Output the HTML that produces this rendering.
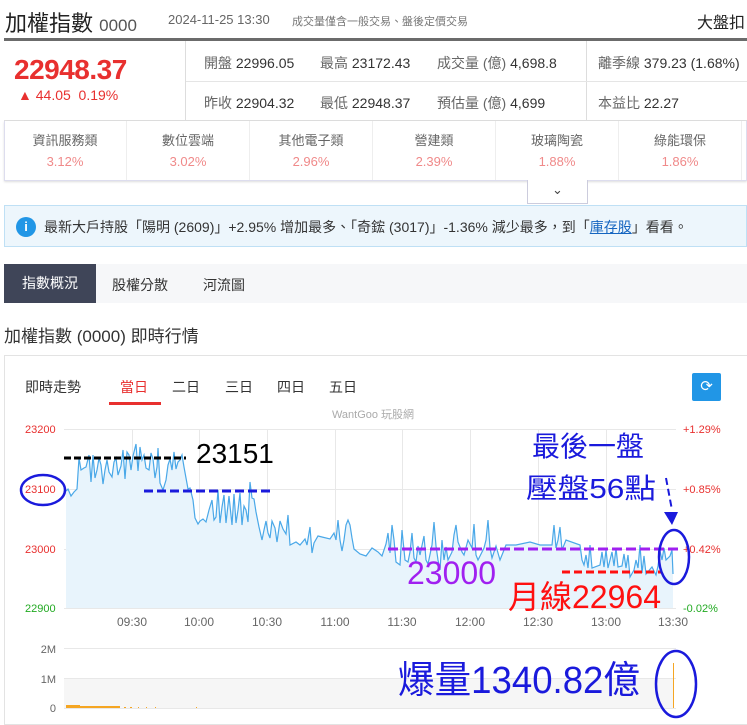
<!DOCTYPE html>
<html><head><meta charset="utf-8"><style>
*{box-sizing:border-box;margin:0;padding:0}
body{width:747px;height:719px;overflow:hidden;background:#fff;font-family:"Liberation Sans","Noto Sans CJK TC",sans-serif;color:#333;position:relative}
.a{position:absolute;white-space:nowrap}
.cell{position:absolute;font-size:14px;color:#333}
.cell b{font-weight:normal;color:#666}
.sec{position:absolute;top:121px;height:59px;width:123px;text-align:center;border-right:1px solid #eee}
.sec .n{font-size:13px;color:#666;margin-top:9px}
.sec .p{font-size:13px;color:#f08a8a;margin-top:5px}
</style></head><body>
<div class="a" style="left:5px;top:6px;font-size:22px;color:#222">加權指數 <span style="font-size:17px;color:#555">0000</span></div>
<div class="a" style="left:168px;top:12px;font-size:13px;color:#666">2024-11-25 13:30</div>
<div class="a" style="left:292px;top:13px;font-size:11px;color:#777">成交量僅含一般交易、盤後定價交易</div>
<div class="a" style="left:697px;top:9px;font-size:16px;color:#222">大盤扣</div>
<div class="a" style="left:4px;top:38px;width:743px;height:3px;background:#6b6b6b"></div>
<div class="a" style="left:4px;top:41px;width:743px;height:80px;border-bottom:1px solid #ddd"></div>
<div class="a" style="left:185px;top:41px;width:1px;height:80px;background:#ddd"></div>
<div class="a" style="left:586px;top:41px;width:1px;height:80px;background:#ddd"></div>
<div class="a" style="left:186px;top:81px;width:561px;height:1px;background:#e5e5e5"></div>
<div class="a" style="left:14px;top:54px;font-size:28px;font-weight:bold;color:#e8302f;letter-spacing:-0.5px">22948.37</div>
<div class="a" style="left:18px;top:87px;font-size:14px;color:#e8302f">▲ 44.05 &nbsp;0.19%</div>
<div class="cell" style="left:204px;top:53px"><b>開盤</b> 22996.05</div>
<div class="cell" style="left:320px;top:53px"><b>最高</b> 23172.43</div>
<div class="cell" style="left:437px;top:53px"><b>成交量 (億)</b> 4,698.8</div>
<div class="cell" style="left:598px;top:53px"><b>離季線</b> 379.23 (1.68%)</div>
<div class="cell" style="left:204px;top:93px"><b>昨收</b> 22904.32</div>
<div class="cell" style="left:320px;top:93px"><b>最低</b> 22948.37</div>
<div class="cell" style="left:437px;top:93px"><b>預估量 (億)</b> 4,699</div>
<div class="cell" style="left:598px;top:93px"><b>本益比</b> 22.27</div>
<div class="a" style="left:4px;top:121px;width:743px;height:60px;border:1px solid #dde;border-top:none;box-shadow:0 1px 2px #ddd"></div>
<div class="sec" style="left:4px"><div class="n">資訊服務類</div><div class="p">3.12%</div></div>
<div class="sec" style="left:127px"><div class="n">數位雲端</div><div class="p">3.02%</div></div>
<div class="sec" style="left:250px"><div class="n">其他電子類</div><div class="p">2.96%</div></div>
<div class="sec" style="left:373px"><div class="n">營建類</div><div class="p">2.39%</div></div>
<div class="sec" style="left:496px"><div class="n">玻璃陶瓷</div><div class="p">1.88%</div></div>
<div class="sec" style="left:619px"><div class="n">綠能環保</div><div class="p">1.86%</div></div>
<div class="a" style="left:527px;top:180px;width:61px;height:24px;border:1px solid #ccd;border-top:none;background:#fff;text-align:center;font-size:13px;color:#444;line-height:20px">⌄</div>
<div class="a" style="left:4px;top:205px;width:743px;height:42px;background:#edf6fc;border:1px solid #bfe0f5"></div>
<div class="a" style="left:16px;top:217px;width:20px;height:20px;border-radius:50%;background:#2196e6;color:#fff;font-size:13px;text-align:center;line-height:20px;font-weight:bold">i</div>
<div class="a" style="left:44px;top:217px;font-size:14px;color:#333">最新大戶持股「陽明 (2609)」+2.95% 增加最多、「奇鋐 (3017)」-1.36% 減少最多，到「<span style="color:#1565c0;text-decoration:underline">庫存股</span>」看看。</div>
<div class="a" style="left:4px;top:264px;width:743px;height:39px;background:#f6f7f9"></div>
<div class="a" style="left:4px;top:264px;width:92px;height:39px;background:#3f4558;color:#fff;font-size:14px;text-align:center;line-height:39px">指數概況</div>
<div class="a" style="left:112px;top:275px;font-size:14px;color:#333">股權分散</div>
<div class="a" style="left:203px;top:275px;font-size:14px;color:#333">河流圖</div>
<div class="a" style="left:4px;top:322px;font-size:17px;color:#333">加權指數 (0000) 即時行情</div>
<div class="a" style="left:4px;top:355px;width:745px;height:370px;border:1px solid #e3e3e3"></div>
<div class="a" style="left:25px;top:377px;font-size:14px;color:#333">即時走勢</div>
<div class="a" style="left:120px;top:377px;font-size:14px;color:#e8302f">當日</div>
<div class="a" style="left:109px;top:402px;width:52px;height:3px;background:#e8302f"></div>
<div class="a" style="left:172px;top:377px;font-size:14px;color:#333">二日</div>
<div class="a" style="left:225px;top:377px;font-size:14px;color:#333">三日</div>
<div class="a" style="left:277px;top:377px;font-size:14px;color:#333">四日</div>
<div class="a" style="left:329px;top:377px;font-size:14px;color:#333">五日</div>
<div class="a" style="left:692px;top:373px;width:29px;height:28px;background:#2196e6;border-radius:2px;color:#fff;text-align:center;line-height:28px;font-size:15px">⟳</div>
<svg class="a" style="left:0;top:0" width="747" height="719">
<g font-family="Liberation Sans, Noto Sans CJK TC, sans-serif">
<text x="373" y="418" font-size="11" fill="#aaa" text-anchor="middle">WantGoo 玩股網</text>
<g stroke="#e8e8e8" stroke-width="1">
<line x1="64" y1="429.5" x2="676" y2="429.5"/><line x1="64" y1="489.5" x2="676" y2="489.5"/><line x1="64" y1="549.5" x2="676" y2="549.5"/><line x1="64" y1="608.5" x2="676" y2="608.5"/>
<line x1="132.5" y1="429" x2="132.5" y2="608"/><line x1="199.5" y1="429" x2="199.5" y2="608"/><line x1="267.5" y1="429" x2="267.5" y2="608"/><line x1="335.5" y1="429" x2="335.5" y2="608"/><line x1="402.5" y1="429" x2="402.5" y2="608"/><line x1="470.5" y1="429" x2="470.5" y2="608"/><line x1="538.5" y1="429" x2="538.5" y2="608"/><line x1="606.5" y1="429" x2="606.5" y2="608"/>
<line x1="64" y1="648.5" x2="676" y2="648.5"/><line x1="64" y1="678.5" x2="676" y2="678.5"/><line x1="64" y1="708.5" x2="676" y2="708.5"/>
</g>
<rect x="64" y="679" width="610" height="29" fill="#f6f6f6"/>
<g font-size="11" fill="#e8302f"><text x="25" y="433">23200</text><text x="25" y="493">23100</text><text x="25" y="553">23000</text><text x="683" y="433">+1.29%</text><text x="683" y="493">+0.85%</text><text x="683" y="553">+0.42%</text></g>
<text x="25" y="612" font-size="11" fill="#2a2">22900</text><text x="683" y="612" font-size="11" fill="#2a2">-0.02%</text>
<g font-size="12" fill="#666" text-anchor="middle"><text x="132" y="626">09:30</text><text x="199" y="626">10:00</text><text x="267" y="626">10:30</text><text x="335" y="626">11:00</text><text x="402" y="626">11:30</text><text x="470" y="626">12:00</text><text x="538" y="626">12:30</text><text x="606" y="626">13:00</text><text x="673" y="626">13:30</text></g>
<g font-size="11" fill="#666" text-anchor="end"><text x="56" y="653">2M</text><text x="56" y="683">1M</text><text x="56" y="712">0</text></g>
<polygon fill="#e8f4fc" points="66,608 66,491 68,489 71,496 74,492 77,489 79,458 81,470 84,468 86,467 89,455 91,482 93,455 95,478 97,470 99,458 101,465 103,484 105,470 107,460 109,472 112,477 114,462 116,458 118,475 121,466 123,450 125,479 127,452 129,455 131,470 133,456 136,444 138,471 140,447 142,460 144,455 146,468 149,470 151,453 153,459 155,478 157,467 158,448 160,483 163,490 166,480 168,465 170,459 172,470 174,452 176,469 178,462 180,460 182,455 184,467 186,478 188,489 190,488 193,500 195,518 198,524 200,521 203,519 206,522 209,510 212,500 214,520 216,517 218,490 220,523 222,507 224,495 226,523 229,496 232,525 234,494 236,523 238,510 240,493 242,525 244,506 246,510 248,522 250,482 252,498 254,499 256,512 259,527 262,540 264,530 266,521 268,533 270,538 272,521 275,528 277,542 280,521 283,529 286,534 288,515 290,545 296,542 300,545 305,539 307,545 310,527 312,553 314,543 318,536 322,537 330,539 334,533 336,540 338,520 340,540 342,551 344,540 346,525 348,520 350,525 352,538 354,549 360,554 366,556 372,548 378,552 382,556 386,544 388,533 390,553 392,525 394,540 396,562 400,565 402,530 405,560 408,562 410,552 412,533 414,558 416,562 418,546 420,555 424,536 426,560 428,564 432,545 434,522 436,546 438,560 440,570 442,540 444,560 446,547 448,560 452,552 454,535 456,525 458,542 462,552 464,555 468,540 472,548 474,524 476,555 478,560 484,548 486,540 488,520 490,548 492,558 496,546 500,560 506,545 516,545 530,542 540,545 552,545 554,525 556,548 558,540 560,527 562,550 566,540 580,545 582,560 584,565 586,555 588,568 590,545 592,568 600,565 602,552 604,567 606,550 608,568 612,552 614,566 616,548 618,567 622,566 624,554 626,568 628,555 630,577 634,570 636,560 638,568 640,545 642,573 644,556 646,574 652,567 656,575 658,566 660,551 662,560 664,548 666,560 670,556 672,550 673,574 673,608"/>
<polyline fill="none" stroke="#4aa8e8" stroke-width="1.2" points="66,491 68,489 71,496 74,492 77,489 79,458 81,470 84,468 86,467 89,455 91,482 93,455 95,478 97,470 99,458 101,465 103,484 105,470 107,460 109,472 112,477 114,462 116,458 118,475 121,466 123,450 125,479 127,452 129,455 131,470 133,456 136,444 138,471 140,447 142,460 144,455 146,468 149,470 151,453 153,459 155,478 157,467 158,448 160,483 163,490 166,480 168,465 170,459 172,470 174,452 176,469 178,462 180,460 182,455 184,467 186,478 188,489 190,488 193,500 195,518 198,524 200,521 203,519 206,522 209,510 212,500 214,520 216,517 218,490 220,523 222,507 224,495 226,523 229,496 232,525 234,494 236,523 238,510 240,493 242,525 244,506 246,510 248,522 250,482 252,498 254,499 256,512 259,527 262,540 264,530 266,521 268,533 270,538 272,521 275,528 277,542 280,521 283,529 286,534 288,515 290,545 296,542 300,545 305,539 307,545 310,527 312,553 314,543 318,536 322,537 330,539 334,533 336,540 338,520 340,540 342,551 344,540 346,525 348,520 350,525 352,538 354,549 360,554 366,556 372,548 378,552 382,556 386,544 388,533 390,553 392,525 394,540 396,562 400,565 402,530 405,560 408,562 410,552 412,533 414,558 416,562 418,546 420,555 424,536 426,560 428,564 432,545 434,522 436,546 438,560 440,570 442,540 444,560 446,547 448,560 452,552 454,535 456,525 458,542 462,552 464,555 468,540 472,548 474,524 476,555 478,560 484,548 486,540 488,520 490,548 492,558 496,546 500,560 506,545 516,545 530,542 540,545 552,545 554,525 556,548 558,540 560,527 562,550 566,540 580,545 582,560 584,565 586,555 588,568 590,545 592,568 600,565 602,552 604,567 606,550 608,568 612,552 614,566 616,548 618,567 622,566 624,554 626,568 628,555 630,577 634,570 636,560 638,568 640,545 642,573 644,556 646,574 652,567 656,575 658,566 660,551 662,560 664,548 666,560 670,556 672,550 673,574"/>
<rect x="66" y="705" width="14" height="3" fill="#f5a623"/><rect x="80" y="706" width="40" height="2" fill="#f5a623"/>
<g fill="#f5a623"><rect x="124" y="707" width="2" height="1"/><rect x="130" y="707" width="2" height="1"/><rect x="138" y="707" width="1" height="1"/><rect x="146" y="707" width="1" height="1"/><rect x="155" y="707" width="1" height="1"/><rect x="196" y="707" width="1" height="1"/></g>
<line x1="673.5" y1="663" x2="673.5" y2="708" stroke="#f5a623" stroke-width="1"/>
<line x1="64" y1="458" x2="186" y2="458" stroke="#000" stroke-width="3" stroke-dasharray="7,3"/>
<line x1="144" y1="491" x2="274" y2="491" stroke="#1a1adc" stroke-width="3" stroke-dasharray="9,4"/>
<line x1="388" y1="549" x2="678" y2="549" stroke="#a020f0" stroke-width="3" stroke-dasharray="10,4"/>
<line x1="562" y1="572" x2="662" y2="572" stroke="#ff1010" stroke-width="3" stroke-dasharray="8,4"/>
<line x1="666" y1="478" x2="672" y2="510" stroke="#1a1adc" stroke-width="2" stroke-dasharray="7,4"/>
<polygon points="664,512 678,512 672,525" fill="#1a1adc"/>
<ellipse cx="43" cy="490" rx="22" ry="15" fill="none" stroke="#1a1adc" stroke-width="2.5"/>
<ellipse cx="674" cy="557" rx="15" ry="27" fill="none" stroke="#1a1adc" stroke-width="2.5"/>
<ellipse cx="676" cy="684" rx="20" ry="33" fill="none" stroke="#1a1adc" stroke-width="2.5"/>
<text x="196" y="463" font-size="28" fill="#000">23151</text>
<text x="532" y="456" font-size="28" fill="#1a1adc">最後一盤</text>
<text x="526" y="498" font-size="28" fill="#1a1adc" textLength="130" lengthAdjust="spacingAndGlyphs">壓盤56點</text>
<text x="407" y="584" font-size="32" fill="#a020f0">23000</text>
<text x="508" y="608" font-size="32" fill="#ff1010">月線22964</text>
<text x="398" y="693" font-size="38" fill="#1a1adc" textLength="242" lengthAdjust="spacingAndGlyphs">爆量1340.82億</text>
</g></svg>
</body></html>
